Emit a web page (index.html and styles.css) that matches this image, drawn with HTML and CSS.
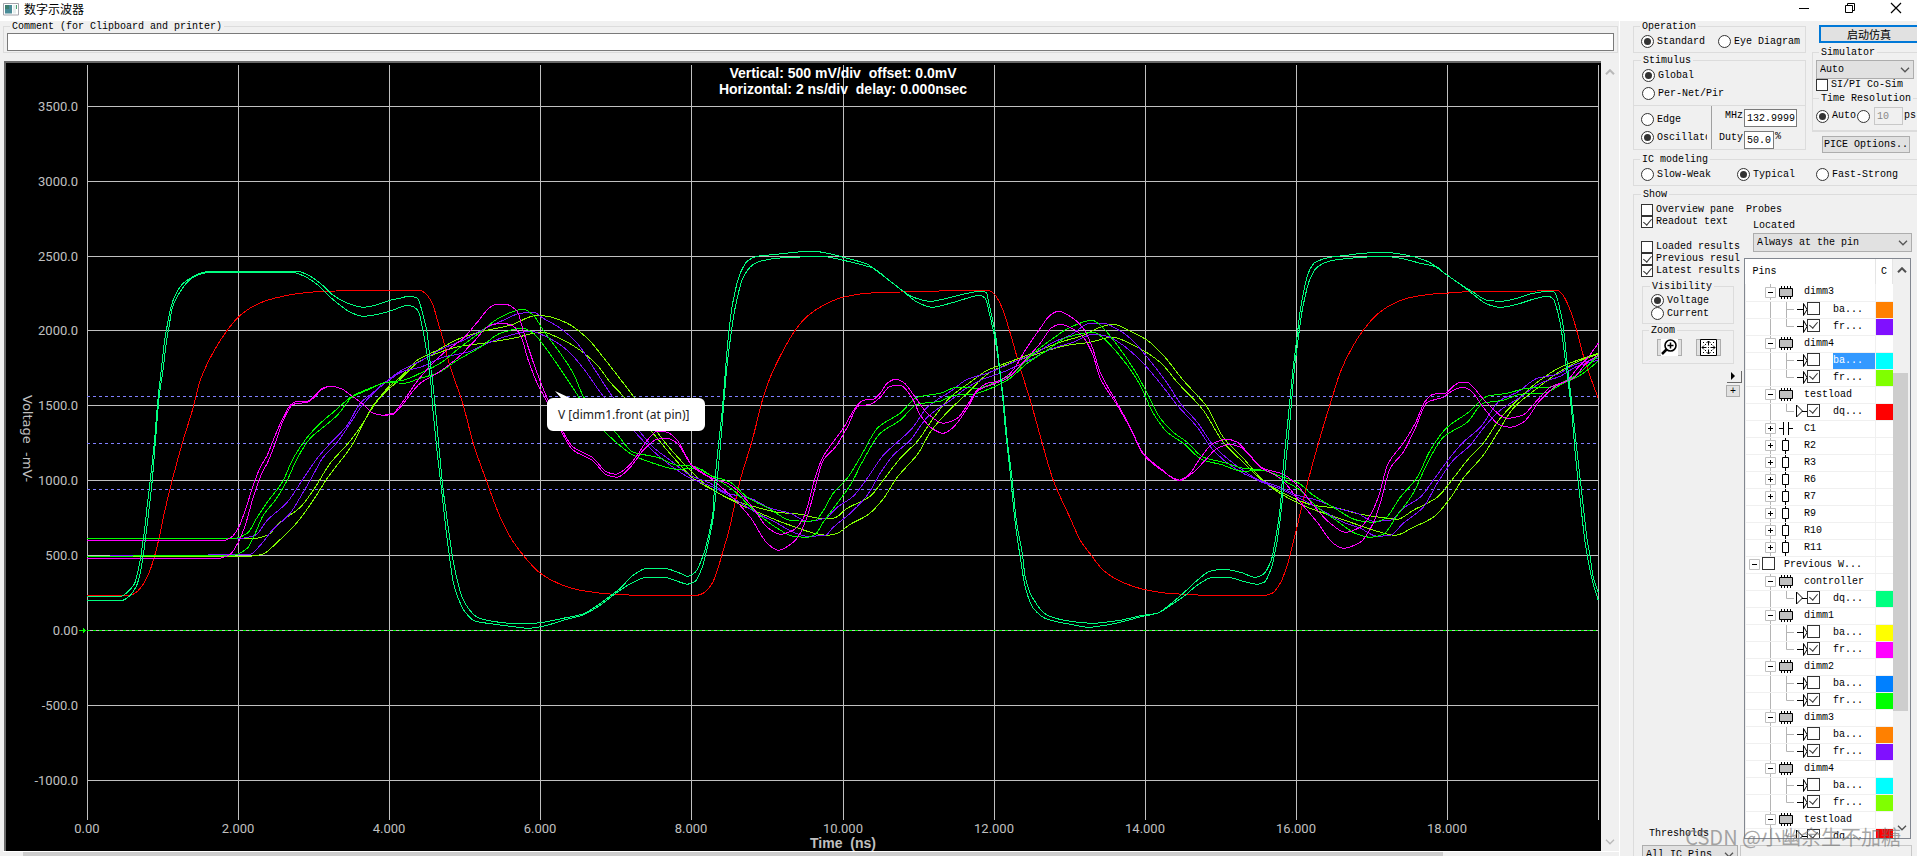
FILE: index.html
```html
<!DOCTYPE html>
<html lang="zh-CN">
<head>
<meta charset="utf-8">
<title>数字示波器</title>
<link rel="stylesheet" href="styles.css">
</head>
<body>
<svg class="defs" aria-hidden="true">
  <symbol id="chip" viewBox="0 0 14 13"><path d="M2.5 0v13M5.5 0v13M8.5 0v13M11.5 0v13" stroke="#000"/><path d="M.5 2.5h13v8H.5z" fill="#c0c0c0" stroke="#000"/></symbol>
  <symbol id="cap" viewBox="0 0 14 13"><path d="M0 6.5h5M9 6.5h5M4.5 0v13M9.5 0v13" stroke="#000" fill="none"/></symbol>
  <symbol id="res" viewBox="0 0 14 17"><path d="M6.5 0v17" stroke="#000"/><path d="M3.5 3.5h6v10h-6z" fill="#fff" stroke="#000"/></symbol>
  <symbol id="mid" viewBox="0 0 21 17"><path d="M.5 0v17M0 8.5h8" stroke="#b4b4b4" fill="none"/><path d="M11 8.5h6M17.5 2.5v12M17.5 2.5l3.500 6l-3.500 6" stroke="#000" fill="none"/></symbol>
  <symbol id="end" viewBox="0 0 21 17"><path d="M.5 0v8.500h7.500" stroke="#b4b4b4" fill="none"/><path d="M11 8.500h6M17.5 2.500v12M17.5 2.500l3.500 6l-3.500 6" stroke="#000" fill="none"/></symbol>
  <symbol id="drv" viewBox="0 0 21 17"><path d="M.5 0v8.500h7.500" stroke="#b4b4b4" fill="none"/><path d="M10.500 2v12l6-6zM16 8.500h5" stroke="#000" fill="none"/></symbol>
  <symbol id="minus" viewBox="0 0 11 11"><path d="M.5.5h10v10H.5z" fill="#fff" stroke="#c0c0c0"/><path d="M3 5.500h5" stroke="#000"/></symbol>
  <symbol id="plus" viewBox="0 0 11 11"><path d="M.5.5h10v10H.5z" fill="#fff" stroke="#c0c0c0"/><path d="M3 5.500h5M5.500 3v5" stroke="#000"/></symbol>
  <symbol id="down" viewBox="0 0 10 6"><path d="M1 .8l4 4l4-4" fill="none" stroke="currentColor" stroke-width="1.300"/></symbol>
  <symbol id="up" viewBox="0 0 10 6"><path d="M1 5.200l4-4l4 4" fill="none" stroke="currentColor" stroke-width="2"/></symbol>
</svg>

<header class="titlebar">
  <svg class="app-icon" width="16" height="13" viewBox="0 0 16 13"><path d="M.5.5h15v11.500H.5z" fill="#fff" stroke="#a5a5ad"/><path d="M2 2h7v8.500H2z" fill="#4a8c98"/><path d="M2 2h4v4H2z" fill="#3f7f70"/><path d="M10 2h3v8.500h-3z" fill="#e6efef"/><path d="M13.500 2v4" stroke="#49a070"/></svg>
  <h1>数字示波器</h1>
  <div class="window-buttons">
    <button aria-label="Minimize"><svg width="12" height="12"><path d="M1 6.500h10" stroke="#000"/></svg></button>
    <button aria-label="Restore"><svg width="12" height="12"><path d="M1.500 3.500h7v7h-7zM3.500 3.500v-2h7v7h-2" fill="none" stroke="#000"/></svg></button>
    <button aria-label="Close"><svg width="12" height="12"><path d="M1 1l10 10M11 1l-10 10" stroke="#000" stroke-width="1.200"/></svg></button>
  </div>
</header>

<main>
  <section class="work">
    <fieldset class="comment">
      <legend><label for="comment">Comment (for Clipboard and printer)</label></legend>
      <input id="comment" type="text">
    </fieldset>
    <div class="scope-row">
      <div class="scope">
        <svg id="scope" viewBox="6 63 1595 788" preserveAspectRatio="xMinYMin meet" role="img" aria-label="Oscilloscope waveforms">
          <g id="grid"></g>
          <g id="traces"></g>
          <path class="zero-mark" d="M79 630.500h7M83.500 628v5M84.500 629v3"/>
          <g id="labels"></g>
          <g class="readout">
            <text x="843" y="78">Vertical: 500 mV/div&#160; offset: 0.0mV</text>
            <text x="843" y="94">Horizontal: 2 ns/div&#160; delay: 0.000nsec</text>
          </g>
          <text class="x-title" x="843" y="848">Time&#160; (ns)</text>
          <text class="y-title" transform="translate(23 395) rotate(90)">Voltage&#160; -mV-</text>
          <g class="tip">
            <path d="M555 391l6 7h-8a6 6 0 0 0-6 6v21a6 6 0 0 0 6 6h146a6 6 0 0 0 6-6v-21a6 6 0 0 0-6-6H570z"/>
            <text x="558" y="419">V [dimm1.front (at pin)]</text>
          </g>
        </svg>
      </div>
      <div class="vscroll"><svg width="10" height="6"><use href="#up"/></svg><svg width="10" height="6"><use href="#down"/></svg></div>
    </div>
    <div class="hscroll"><div class="hthumb"></div></div>
  </section>

  <aside class="side">
    <div class="top">
      <div class="top-left">
        <fieldset class="operation">
          <legend>Operation</legend>
          <label><input type="radio" name="op" checked>Standard</label>
          <label><input type="radio" name="op">Eye Diagram</label>
        </fieldset>
        <fieldset class="stimulus">
          <legend>Stimulus</legend>
          <label><input type="radio" name="stim" checked>Global</label>
          <label><input type="radio" name="stim">Per-Net/Pir</label>
        </fieldset>
        <div class="source">
          <div class="source-kind">
            <label><input type="radio" name="src">Edge</label>
            <label><input type="radio" name="src" checked>Oscillator</label>
          </div>
          <div class="source-values">
            <div><label for="mhz">MHz</label><input id="mhz" class="mhz" type="text" value="132.9999"></div>
            <div><label for="duty">Duty</label><input id="duty" class="duty" type="text" value="50.0"><span>%</span></div>
          </div>
        </div>
      </div>
      <div class="top-right">
        <button class="run">启动仿真</button>
        <fieldset class="simulator">
          <legend>Simulator</legend>
          <div class="select auto"><select aria-label="Simulator"><option>Auto</option></select><svg width="10" height="6"><use href="#down"/></svg></div>
          <label class="cosim"><input type="checkbox">SI/PI Co-Sim</label>
          <fieldset class="resolution">
            <legend>Time Resolution</legend>
            <label><input type="radio" name="res" checked>Auto</label>
            <input type="radio" name="res" aria-label="Fixed resolution">
            <input class="ps" type="text" value="10" disabled aria-label="Resolution in ps"><span>ps</span>
          </fieldset>
        </fieldset>
        <button class="spice">PICE Options..</button>
      </div>
    </div>
    <fieldset class="modeling">
      <legend>IC modeling</legend>
      <label><input type="radio" name="ic">Slow-Weak</label>
      <label><input type="radio" name="ic" checked>Typical</label>
      <label><input type="radio" name="ic">Fast-Strong</label>
    </fieldset>
    <fieldset class="show">
      <legend>Show</legend>
      <div class="show-left">
        <label><input type="checkbox">Overview pane</label>
        <label><input type="checkbox" checked>Readout text</label>
        <div class="results">
          <label><input type="checkbox">Loaded results</label>
          <label><input type="checkbox" checked>Previous results</label>
          <label><input type="checkbox" checked>Latest results</label>
        </div>
        <fieldset class="visibility">
          <legend>Visibility</legend>
          <label><input type="radio" name="vis" checked>Voltage</label>
          <label><input type="radio" name="vis">Current</label>
        </fieldset>
        <fieldset class="zoom">
          <legend>Zoom</legend>
          <button aria-label="Zoom in"><svg width="17" height="17"><path d="M0 0h17v17H0z" fill="#fff"/><circle cx="9.500" cy="6.500" r="5.500" fill="#fff" stroke="#000" stroke-width="1.600"/><path d="M6.500 6.500h6M9.500 3.500v6" stroke="#000" stroke-width="1.500"/><path d="M5.500 10.500L1 15" stroke="#000" stroke-width="2.500"/></svg></button>
          <button aria-label="Fit to window"><svg width="17" height="17"><path d="M.5.500h16v16H.500z" fill="#fff" stroke="#000"/><path d="M8.500 2v4.500M8.500 10.500v4.500M2 8.500h4.500M10.500 8.500h4.500M6.500 4l2-2l2 2M6.500 13l2 2l2-2M4 6.500l-2 2l2 2M13 6.500l2 2l-2 2M3 3.500h1M13 3.500h1M3 13.500h1M13 13.500h1M5 5.500h1M11 5.500h1M5 11.500h1M11 11.500h1M8 8.500h1" fill="none" stroke="#000"/></svg></button>
        </fieldset>
        <div class="pane-buttons">
          <button class="expand" aria-label="Expand"><svg width="15" height="12"><path d="M5 2v8l4-4z" /></svg></button>
          <button class="add" aria-label="Add">+</button>
        </div>
        <label class="thresholds" for="thresholds">Thresholds</label>
        <div class="select pins-select"><select id="thresholds"><option>All IC Pins</option></select><svg width="10" height="6"><use href="#down"/></svg></div>
      </div>
      <div class="show-right">
        <p class="probes">Probes</p>
        <label class="located" for="located">Located</label>
        <div class="select located-select"><select id="located"><option>Always at the pin</option></select><svg width="10" height="6"><use href="#down"/></svg></div>
        <div class="tree">
          <div class="tree-view">
          <table>
            <thead><tr><th>Pins</th><th class="col">C</th></tr></thead>
            <tbody id="pins"></tbody>
          </table>
          </div>
          <div class="tree-scroll"><svg width="10" height="6"><use href="#up"/></svg><div class="tree-thumb"></div><svg width="10" height="6"><use href="#down"/></svg></div>
        </div>
        <div class="detail"></div>
      </div>
    </fieldset>
  </aside>
</main>
<p class="watermark">CSDN @小幽余生不加糖</p>
<script src="scope.js"></script>
</body>
</html>
```
FILE: styles.css
```css
* { box-sizing: border-box; }
body {
  margin: 0;
  height: 100vh;
  display: flex;
  flex-direction: column;
  overflow: hidden;
  background: #f0f0f0;
  color: #000;
  font: 10px/12px "Liberation Mono", "Noto Sans CJK SC", monospace;
}
button, input, select { font: inherit; color: inherit; margin: 0; padding: 0; }
svg { display: block; flex: none; }
p { margin: 0; }
.defs { position: absolute; width: 0; height: 0; }

.titlebar {
  flex: none;
  height: 21px;
  display: flex;
  align-items: center;
  padding: 0 15px 5px 3px;
  background: #fff;
}
.app-icon { margin-top: 3px; }
.titlebar h1 { margin: 2px 0 0 5px; font: 12px/16px "Noto Sans CJK SC", sans-serif; }
.window-buttons { margin-left: auto; display: flex; gap: 34px; }
.window-buttons button { border: 0; background: none; width: 12px; height: 12px; }

main { flex: 1; min-height: 0; display: flex; }
.work { flex: 1; min-width: 0; display: flex; flex-direction: column; padding-left: 3px; }

fieldset { margin: 0; padding: 0; min-width: 0; border: 1px solid #dcdcdc; }
legend { margin-left: 7px; padding: 0 2px; line-height: 11px; height: 11px; }
label { display: flex; align-items: center; gap: 3px; white-space: nowrap; }
.operation > legend, .stimulus > legend, .modeling > legend, .visibility > legend { margin-left: -1px; }
.comment > legend, .simulator > legend, .resolution > legend { margin-left: 3px; }
.zoom > legend { margin-left: -8px; }

.comment { height: 32px; padding: 1px 3px; margin-right: 1px; }
.comment input { display: block; width: 100%; height: 18px; border: 1px solid #7a7a7a; background: #fff; }

.scope-row { flex: 1; min-height: 0; display: flex; margin: 8px 0 0 1px; }
.scope { flex: 1; min-width: 0; background: #000; border-left: 2px solid #696969; border-top: 2px solid #696969; }
.scope svg { width: 100%; height: 100%; }
.vscroll { width: 18px; color: #b8b8b8; display: flex; flex-direction: column; justify-content: space-between; padding: 8px 4px 6px; }
.hscroll { flex: none; height: 5px; border-top: 1px solid #fff; padding-left: 20px; }
.hthumb { width: 89%; height: 4px; background: #cdcdcd; }

.grid-line { stroke: #c0c0c0; shape-rendering: crispEdges; }
.threshold { stroke: #8080ff; stroke-dasharray: 3 3; shape-rendering: crispEdges; }
.zero { stroke: #0f0; stroke-dasharray: 3 3; shape-rendering: crispEdges; }
.zero-mark { stroke: #0f0; fill: none; }
.trace { fill: none; shape-rendering: crispEdges; }
#labels text { fill: #c0c0c0; font: 13px Roboto, sans-serif; }
#labels .y { text-anchor: end; }
#labels .x { text-anchor: middle; }
.readout text { fill: #fff; font: bold 14px "Liberation Sans", sans-serif; text-anchor: middle; }
.x-title { fill: #c0c0c0; font: bold 14px "Liberation Sans", sans-serif; text-anchor: middle; }
.y-title { fill: #c0c0c0; font: 13px "DejaVu Sans", sans-serif; }
.tip path { fill: #fff; }
.tip text { fill: #222; font: 12px "Noto Sans", sans-serif; }

.side { width: 298px; border-left: 1px solid #fff; padding-left: 13px; display: flex; flex-direction: column; overflow: hidden; }
.top { display: flex; gap: 6px; height: 128px; }
.top-left { width: 173px; }
.top-right { flex: 1; min-width: 0; }

input[type=radio], input[type=checkbox] {
  appearance: none;
  flex: none;
  position: relative;
  width: 13px;
  height: 13px;
  border: 1px solid #333;
  background: #fff;
}
input[type=radio] { border-radius: 50%; }
input[type=checkbox] { width: 12px; height: 12px; }
input[type=radio]:checked::after {
  content: "";
  position: absolute;
  inset: 2px;
  border-radius: 50%;
  background: #333;
}
input[type=checkbox]:checked::after {
  content: "";
  position: absolute;
  left: 3px;
  top: 0;
  width: 4px;
  height: 7px;
  border: solid #333;
  border-width: 0 1px 1px 0;
  transform: rotate(40deg);
}
input[type=text] { border: 1px solid #7a7a7a; background: #fff; height: 18px; padding-left: 2px; }

.operation { height: 32px; display: flex; padding: 3px 0 0 7px; gap: 13px; align-items: flex-start; }
.stimulus { height: 50px; margin-top: 2px; padding: 3px 0 0 8px; border-bottom: 0; display: flex; flex-direction: column; gap: 5px; }
.source { height: 45px; border: 1px solid #dcdcdc; display: flex; }
.source-kind { width: 78px; padding: 7px 4px 0 7px; display: flex; flex-direction: column; gap: 5px; border-right: 1px solid #a0a0a0; }
.source-kind label { overflow: hidden; }
.source-values { padding: 3px 0 0 5px; display: flex; flex-direction: column; gap: 4px; }
.source-values div { display: flex; gap: 1px; }
.source-values label { width: 26px; justify-content: flex-end; height: 14px; }
.mhz { width: 53px; }
.duty { width: 30px; }

.run { display: block; width: 100px; height: 18px; margin: 4px 0 0 7px; border: 2px solid #0078d7; background: #e1e1e1; font: 11px/13px "Noto Sans CJK SC", sans-serif; }
.simulator { height: 85px; margin-top: 4px; border-right: 0; border-bottom: 2px solid #dcdcdc; padding: 2px 0 0 3px; }
.select { position: relative; height: 19px; }
.select select { appearance: none; width: 100%; height: 100%; border: 1px solid #adadad; background: #e1e1e1; padding-left: 3px; border-radius: 0; }
.select svg { position: absolute; right: 4px; top: 7px; color: #555; pointer-events: none; }
.auto { width: 98px; }
.cosim { height: 12px; }
.resolution { margin: 2px 0 0 -3px; border-width: 1px 0 0; display: flex; align-items: center; gap: 1px; padding: 3px 0 0 3px; }
.resolution input[type=text] { width: 29px; border-color: #c8c8c8; background: #f0f0f0; color: #888; margin-left: 3px; }
.spice { display: block; width: 88px; height: 17px; margin: 4px 0 0 10px; border: 1px solid #adadad; background: #e1e1e1; white-space: nowrap; }

.modeling { flex: none; height: 32px; margin-top: 5px; border-right: 0; display: flex; align-items: flex-start; padding: 3px 0 0 7px; }
.modeling label { flex: none; width: 79px; }
.modeling label:first-of-type { width: 96px; }

.show { flex: 1; min-height: 0; margin-top: 3px; border-right: 0; border-bottom: 0; display: flex; }
.show-left { width: 110px; flex: none; padding: 4px 4px 0 7px; display: flex; flex-direction: column; }
.show-left > label, .results label { flex: none; height: 12px; overflow: hidden; }
.results { flex: none; margin-top: 13px; }
.visibility { flex: none; width: 92px; height: 43px; margin: 4px 0 0 1px; padding: 2px 0 0 8px; }
.visibility label { height: 13px; gap: 3px; }
.zoom { flex: none; width: 92px; height: 39px; margin: 1px 0 0 1px; display: flex; gap: 14px; padding: 3px 0 0 14px; align-items: flex-start; }
.zoom button { width: 25px; height: 17px; border: 1px solid #adadad; background: #e1e1e1; display: flex; align-items: center; justify-content: center; }
.pane-buttons { margin: 6px 0 0 85px; display: flex; flex-direction: column; gap: 3px; }
.expand { width: 15px; height: 12px; border: 0; background: #f0f0f0; box-shadow: 1px 1px 0 #696969; }
.add { width: 14px; height: 12px; border: 1px solid #adadad; background: #e1e1e1; line-height: 9px; }
.show-left > .thresholds { margin: auto 0 0 8px; }
.pins-select { flex: none; width: 96px; margin: 5px 0 -8px 1px; }

.show-right { flex: 1; min-width: 0; padding-top: 4px; display: flex; flex-direction: column; }
.probes { margin-left: 2px; }
.located { margin: 4px 0 1px 9px; }
.located-select { width: 159px; height: 19px; margin-left: 9px; }
.tree { flex: 1; min-height: 0; width: 167px; margin-top: 6px; border: 1px solid #828790; background: #fff; display: flex; overflow: hidden; }
.tree-view { flex: 1; overflow: hidden; }
.tree table { width: 100%; table-layout: fixed; border-collapse: collapse; }
.tree th { height: 25px; padding: 0 0 0 7px; text-align: left; font-weight: normal; }
.tree .col { width: 17px; padding: 0 0 0 5px; border-left: 1px solid #e5e5e5; border-right: 1px solid #e5e5e5; }
.tree td { height: 17px; padding: 0; border-bottom: 1px solid #f0f0f0; border-left: 1px solid #f0f0f0; }
.tree-scroll { width: 17px; background: #f0f0f0; display: flex; flex-direction: column; align-items: center; padding: 8px 0 7px; color: #505050; }
.tree-thumb { width: 15px; height: 60%; margin: 100px 2px auto 0; flex: none; background: #cdcdcd; }
.row { position: relative; height: 16px; display: flex; align-items: center; padding-left: 19px; white-space: nowrap; overflow: hidden; }
.row::before { content: ""; position: absolute; left: 24px; top: 0; bottom: 0; border-left: 1px solid #b4b4b4; }
.row.root::before { display: none; }
.row.root { padding-left: 3px; gap: 2px; }
.row.root span { margin-left: 7px; }
.row button { position: relative; width: 11px; height: 11px; border: 0; background: none; }
.row .part { margin: 0 11px 0 3px; }
.row.pin { padding-left: 40px; }
.row input[type=checkbox] { width: 13px; height: 13px; margin-top: -2px; }
.row.pin span { flex: 1; margin-left: 13px; line-height: 16px; }
.row .chosen { background: #3399ff; color: #fff; }
.detail { flex: none; width: 172px; height: 18px; margin: 6px 0 -7px -4px; border: 1px solid #c8c8c8; }

.watermark {
  position: absolute;
  right: 16px;
  bottom: 4px;
  font: 20px/30px "Noto Sans CJK SC", sans-serif;
  color: rgba(110, 110, 110, .6);
}
```
FILE: scope.js
```js
const NS = "http://www.w3.org/2000/svg";

function add(parent, tag, attrs, text) {
  const el = document.createElementNS(NS, tag);
  for (const key in attrs) el.setAttribute(key, attrs[key]);
  if (text !== undefined) el.textContent = text;
  parent.appendChild(el);
  return el;
}

/* Grid, thresholds and axis labels */
const grid = document.getElementById("grid");
const labels = document.getElementById("labels");
const left = 87, right = 1598, top_ = 65, bottom = 820, stepX = 151.1;
const gridY = [106, 181, 256, 330, 405, 480, 555, 630, 705, 780];

for (let i = 0; i <= 10; i++) {
  const x = Math.round(left + i * stepX);
  add(grid, "path", { class: "grid-line", d: `M${x + 0.5} ${top_}V${bottom}` });
  if (i < 10) {
    add(labels, "text", { class: "x", x: x, y: 833 }, i ? (i * 2).toFixed(3) : "0.00");
  }
}
gridY.forEach((y, i) => {
  const mv = 3500 - i * 500;
  add(grid, "path", { class: "grid-line", d: `M${left} ${y + 0.5}H${right}` });
  add(labels, "text", { class: "y", x: 78, y: y + 5 }, mv ? mv.toFixed(1) : "0.00");
});
for (const y of [396.5, 443.5, 489.5]) {
  add(grid, "path", { class: "threshold", d: `M${left} ${y}H${right}` });
}
add(grid, "path", { class: "zero", d: `M${left} 630.5H${right}` });

/* Samples: x,y pairs */
const signals = [
  ["#ff0000", "87,595 130,595 136,592 143,584 149,572 154,557 159,537 164,513 172,480 182,443 193,407 200,380 213,352 227,330 240,315 253,306 267,300 283,296 300,293 325,291 390,290 420,290 425,293 432,303 438,323 443,340 448,360 463,405 473,443 486,480 500,517 512,540 523,555 540,573 560,584 580,590 613,594 640,595 697,595 703,593 712,583 718,567 723,550 728,533 740,480 752,440 763,397 770,377 783,350 795,330 807,316 827,303 843,297 867,293 890,292 933,291 960,290 988,290 995,295 1002,308 1010,333 1020,368 1030,400 1042,443 1053,480 1070,518 1080,540 1091,555 1103,570 1120,581 1143,589 1167,593 1183,594 1207,595 1265,595 1272,593 1280,583 1287,565 1293,542 1300,513 1308,480 1319,440 1332,397 1340,372 1352,347 1363,330 1377,314 1390,305 1407,298 1430,294 1460,292 1470,291 1527,291 1557,290 1562,294 1568,305 1575,325 1583,355 1592,382 1598,398"],
  ["#80ff00", "87,538 255,538 267,535 280,522 300,507 313,490 330,463 348,443 360,427 372,408 387,388 400,377 417,360 437,350 460,338 483,331 510,325 537,315 547,316 567,323 587,338 603,357 617,375 633,396 657,432 673,452 693,473 710,488 733,500 753,506 777,512 800,514 820,518 833,518 847,508 870,496 883,480 900,458 918,440 933,418 950,397 970,382 987,370 1000,365 1027,355 1060,342 1083,335 1100,327 1113,324 1130,331 1147,340 1163,355 1183,380 1207,407 1223,437 1243,458 1263,480 1283,493 1313,505 1337,508 1360,514 1380,517 1397,519 1413,510 1437,497 1453,478 1467,460 1483,443 1500,418 1520,397 1537,382 1560,367 1580,359 1598,353"],
  ["#80ff00", "87,556 247,556 262,554 277,542 297,522 313,500 327,478 353,443 363,423 373,405 387,390 400,379 418,362 437,353 460,346 483,343 513,338 542,332 557,337 577,348 597,365 610,382 623,396 652,432 673,457 693,478 713,490 737,503 760,513 787,524 827,535 837,533 850,524 867,515 882,500 897,477 918,453 930,432 947,412 967,393 987,374 1007,364 1033,355 1067,345 1090,342 1112,337 1133,345 1160,362 1177,382 1203,410 1223,442 1243,462 1263,481 1283,495 1307,507 1333,516 1353,523 1377,531 1395,535 1413,527 1433,517 1450,498 1463,478 1483,455 1497,433 1513,408 1537,388 1557,373 1583,359 1598,354"],
  ["#8010ff", "87,538 240,538 255,535 267,520 287,502 300,483 317,458 330,443 347,425 360,403 373,392 390,378 403,369 420,361 443,348 463,340 483,329 503,320 520,313 533,312 543,318 560,328 577,343 593,367 612,396 640,432 653,447 670,460 690,475 710,483 727,493 750,498 770,508 790,513 807,521 825,518 837,507 853,496 867,478 883,455 897,442 912,428 927,407 952,390 967,379 987,373 1013,362 1037,352 1053,342 1070,335 1090,323 1103,323 1117,329 1130,338 1147,357 1167,383 1180,403 1197,422 1213,445 1233,463 1257,479 1280,487 1297,495 1317,500 1337,508 1357,513 1373,521 1390,520 1403,508 1420,497 1433,480 1450,457 1463,442 1480,427 1500,400 1517,392 1537,378 1557,374 1573,365 1598,358"],
  ["#8010ff", "87,556 250,554 260,545 272,530 290,513 300,497 310,480 323,457 337,442 350,423 362,405 373,393 390,379 403,371 420,367 443,357 467,352 487,343 510,335 530,331 547,337 567,350 583,368 603,396 635,432 650,448 670,465 690,478 713,487 733,498 757,513 777,523 793,532 807,536 825,535 833,527 850,513 867,495 880,473 893,455 910,440 927,417 953,398 963,390 980,380 1000,373 1033,358 1053,348 1073,342 1093,334 1107,336 1120,343 1140,360 1160,383 1177,405 1197,427 1213,450 1233,467 1257,480 1283,490 1307,502 1327,513 1343,522 1360,528 1377,536 1390,535 1403,523 1423,507 1437,483 1453,460 1470,445 1483,428 1500,410 1520,397 1540,383 1560,376 1577,366 1598,360"],
  ["#00ff00", "87,538 235,538 247,533 257,517 267,502 282,482 293,458 307,437 320,423 333,412 352,396 367,389 387,382 403,380 420,373 440,363 460,347 480,332 500,317 523,309 533,315 543,330 560,353 573,373 583,396 597,418 615,432 633,452 657,457 677,465 693,466 710,475 730,482 747,497 770,509 790,520 807,521 815,520 822,512 833,493 847,478 860,457 878,427 900,413 917,397 940,393 957,387 977,388 993,383 1013,373 1033,353 1053,338 1070,327 1092,320 1103,328 1117,345 1133,368 1147,393 1160,418 1173,432 1187,442 1203,457 1223,462 1243,468 1263,470 1280,476 1297,482 1313,495 1333,507 1357,520 1373,522 1385,518 1400,497 1417,477 1430,450 1447,427 1467,413 1487,396 1507,393 1527,388 1548,387 1567,380 1580,372 1598,355"],
  ["#00ff00", "87,556 233,555 247,548 255,533 263,515 275,500 287,480 297,458 310,438 323,427 337,415 352,397 367,390 387,382 403,383 420,378 437,373 457,360 480,347 500,333 523,328 533,333 547,350 563,373 578,396 590,417 605,432 617,443 633,455 653,463 677,469 697,468 713,477 733,490 757,513 777,528 793,536 807,537 815,534 823,522 837,503 850,485 863,460 880,433 900,420 917,404 940,401 953,395 973,394 983,391 1007,380 1027,363 1047,350 1067,337 1093,332 1103,338 1127,365 1140,385 1153,413 1167,432 1183,443 1203,460 1220,464 1243,471 1263,470 1283,480 1300,490 1317,507 1333,518 1357,534 1370,537 1383,534 1397,515 1413,493 1427,463 1443,437 1467,422 1483,403 1503,400 1520,394 1543,393 1563,383 1580,375 1598,361"],
  ["#ff00ff", "87,540 224,540 231,537 238,528 245,510 253,485 260,467 267,455 273,440 283,417 290,405 297,401 307,401 313,397 322,388 330,386 340,388 352,396 363,404 373,413 383,415 393,413 400,405 420,377 443,353 463,338 477,322 490,307 497,304 505,304 517,311 522,327 528,347 537,373 547,398 557,418 563,432 573,447 582,452 592,457 607,472 615,474 627,467 637,455 647,440 657,431 667,432 677,440 693,467 710,477 727,483 737,490 753,508 767,527 780,534 793,530 802,520 807,507 815,477 822,458 832,443 843,428 857,405 863,400 873,399 880,393 887,383 895,379 903,382 915,397 927,413 943,423 957,418 967,405 977,390 987,383 997,381 1010,373 1025,350 1040,328 1050,315 1058,311 1068,315 1083,328 1092,347 1100,372 1117,403 1130,427 1143,453 1160,468 1178,480 1188,475 1200,458 1213,443 1227,439 1237,442 1247,452 1263,468 1283,474 1297,485 1313,505 1330,523 1345,532 1360,527 1370,515 1378,497 1388,463 1403,443 1415,423 1425,401 1433,394 1445,393 1453,386 1460,382 1467,382 1472,386 1487,403 1507,418 1522,415 1537,400 1550,387 1567,380 1577,368 1587,358 1598,343"],
  ["#ff00ff", "87,558 218,558 230,554 238,542 245,525 253,497 262,472 267,463 275,443 283,420 293,404 307,402 313,398 322,389 330,386 340,388 352,396 363,404 373,413 383,415 393,414 400,407 420,383 437,373 457,358 473,342 490,325 503,323 513,326 521,337 528,360 537,383 547,402 563,435 573,450 592,460 607,475 617,477 630,467 643,450 657,439 667,438 677,443 690,463 713,480 733,498 750,517 767,543 778,550 793,542 800,533 808,513 815,487 823,460 835,447 847,427 858,406 870,404 880,397 890,386 900,385 912,398 920,415 933,429 943,433 953,427 967,408 978,390 990,385 1007,378 1023,362 1040,343 1052,327 1060,324 1075,330 1083,337 1092,353 1100,378 1117,405 1130,428 1143,454 1160,469 1180,480 1192,473 1205,460 1217,448 1230,444 1242,448 1260,467 1280,478 1300,502 1317,522 1333,543 1343,548 1360,542 1373,523 1380,503 1390,468 1403,452 1415,428 1427,402 1443,397 1453,390 1462,387 1470,390 1483,407 1500,425 1510,427 1523,422 1540,400 1557,385 1573,378 1587,362 1598,355"],
  ["#00ff80", "87,596 121,596 127,592 134,584 138,570 141,553 144,532 147,505 150,480 154,443 158,396 161,370 164,343 167,325 170,310 174,297 182,284 190,278 200,273 210,271 297,271 308,275 320,283 333,295 350,304 363,307 375,305 390,300 400,298 408,296 415,297 418,299 422,312 427,333 430,363 433,387 436,417 439,450 443,490 447,520 452,555 457,580 462,597 468,608 477,617 487,620 510,623 533,623 543,622 563,618 582,614 593,608 607,598 620,588 633,575 647,568 663,568 680,573 687,576 695,572 703,555 708,537 713,510 714,490 718,447 722,410 725,373 728,337 733,300 740,273 748,260 757,256 777,254 795,252 813,251 827,253 843,257 867,264 873,268 890,281 903,291 913,297 930,301 947,298 963,294 980,291 986,292 988,300 993,323 995,333 1000,373 1003,397 1007,440 1012,480 1016,520 1022,553 1025,577 1032,597 1047,615 1070,621 1093,623 1105,622 1120,620 1143,615 1157,613 1170,604 1183,593 1197,580 1210,571 1223,569 1240,572 1255,577 1263,574 1271,560 1275,540 1280,507 1283,467 1288,417 1293,367 1297,335 1300,310 1308,273 1315,262 1330,257 1347,255 1363,253 1383,252 1407,255 1427,261 1443,272 1460,284 1473,292 1487,300 1500,301 1517,298 1533,293 1550,291 1554,292 1562,320 1567,363 1572,407 1577,453 1582,497 1587,540 1590,557 1593,577 1598,592"],
  ["#00ff80", "87,600 122,600 129,596 136,586 140,573 143,555 146,532 149,507 152,480 155,443 159,396 163,368 166,343 169,325 172,308 176,298 183,287 190,279 200,274 211,272 292,272 304,276 318,285 330,297 340,305 350,312 363,316 378,314 392,310 408,305 414,307 418,311 425,343 430,377 433,413 437,453 441,487 445,523 449,555 453,582 458,598 465,612 475,621 487,623 510,626 528,628 543,626 563,620 582,615 597,607 617,592 633,582 647,577 663,577 680,582 687,584 695,581 702,567 708,543 713,517 716,490 720,447 723,410 726,373 729,347 735,307 743,277 752,265 760,261 777,258 795,257 820,256 843,260 867,266 873,268 890,281 903,291 917,302 932,307 950,303 967,298 979,295 985,298 990,317 995,340 1002,393 1005,427 1010,473 1015,523 1020,557 1025,587 1033,608 1047,619 1070,624 1088,627 1105,625 1120,622 1143,616 1157,613 1172,604 1185,595 1197,585 1213,577 1227,577 1243,581 1257,584 1264,582 1271,568 1277,540 1281,510 1285,467 1290,417 1294,370 1297,346 1302,310 1310,278 1318,266 1333,260 1363,257 1383,256 1400,258 1420,263 1437,267 1443,272 1460,284 1473,294 1487,304 1500,307 1517,304 1533,299 1548,296 1553,299 1560,323 1565,360 1571,407 1575,453 1580,500 1585,543 1592,580 1598,600"]
];

/* Cubic path through the samples with slope-limited tangents */
function smooth(text) {
  const p = text.split(" ").map(s => s.split(",").map(v => Number(v) + 0.25));
  const n = p.length;
  const slope = [];
  for (let i = 0; i < n - 1; i++) slope.push((p[i + 1][1] - p[i][1]) / (p[i + 1][0] - p[i][0]));
  const tan = p.map((_, i) => {
    if (i === 0) return slope[0];
    if (i === n - 1) return slope[n - 2];
    const a = slope[i - 1], b = slope[i];
    return a * b <= 0 ? 0 : 2 * a * b / (a + b);
  });
  let d = `M${p[0]}`;
  for (let i = 0; i < n - 1; i++) {
    const h = (p[i + 1][0] - p[i][0]) / 3;
    d += `C${p[i][0] + h} ${p[i][1] + tan[i] * h} ${p[i + 1][0] - h} ${p[i + 1][1] - tan[i + 1] * h} ${p[i + 1]}`;
  }
  return d;
}

const traces = document.getElementById("traces");
for (const [color, samples] of signals) {
  add(traces, "path", { class: "trace", stroke: color, d: smooth(samples) });
}

/* Pin tree: [kind, label, colour, checked, chosen] */
const dimm = (name, back, front, chosen) => [
  ["chip", name],
  ["mid", "ba...", back, false, chosen],
  ["end", "fr...", front, true]
];
const rows = [
  ...dimm("dimm3", "#ff8000", "#8010ff"),
  ...dimm("dimm4", "#00ffff", "#80ff00", true),
  ["chip", "testload"], ["drv", "dq...", "#ff0000", true],
  ["cap", "C1"],
  ...["R2", "R3", "R6", "R7", "R9", "R10", "R11"].map(r => ["res", r]),
  ["root", "Previous W..."],
  ["chip", "controller"], ["drv", "dq...", "#00ff80", true],
  ...dimm("dimm1", "#ffff00", "#ff00ff"),
  ...dimm("dimm2", "#0080ff", "#00ff00"),
  ...dimm("dimm3", "#ff8000", "#8010ff"),
  ...dimm("dimm4", "#00ffff", "#80ff00"),
  ["chip", "testload"], ["drv", "dq...", "#ff0000", true]
];
const icon = (id, w, h, cls = "") => `<svg class="${cls}" width="${w}" height="${h}"><use href="#${id}"/></svg>`;
document.getElementById("pins").innerHTML = rows.map(([kind, label, color, checked, chosen]) => {
  let body, cls = "";
  if (color) {
    cls = "pin";
    body = `${icon(kind, 21, 17)}<input type="checkbox" aria-label="${label}"${checked ? " checked" : ""}><span${chosen ? ' class="chosen"' : ""}>${label}</span>`;
  } else {
    const open = kind === "chip" || kind === "root";
    const toggle = `<button aria-label="Toggle ${label}">${icon(open ? "minus" : "plus", 11, 11)}</button>`;
    if (kind === "root") {
      cls = "root";
      body = `${toggle}<input type="checkbox" aria-label="${label}"><span>${label}</span>`;
    } else {
      body = `${toggle}${icon(kind, 14, kind === "res" ? 17 : 13, "part")}<span>${label}</span>`;
    }
  }
  return `<tr><td><div class="row ${cls}">${body}</div></td><td${color ? ` style="background:${color}"` : ""}></td></tr>`;
}).join("");
```
